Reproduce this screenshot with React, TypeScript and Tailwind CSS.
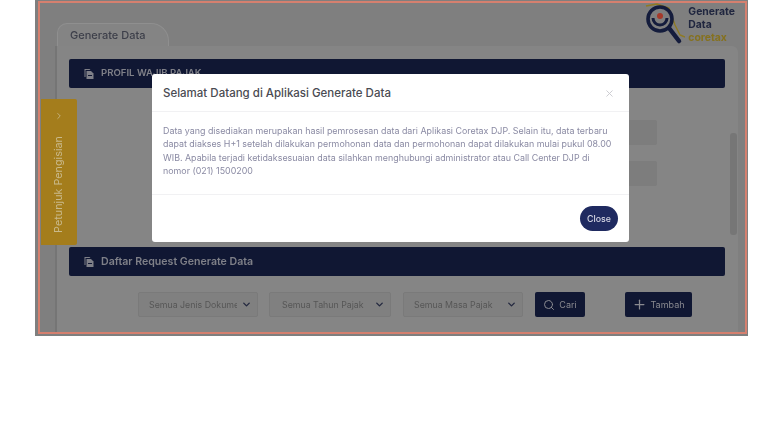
import { ChevronDown, ChevronRight, Plus, Search, X } from "lucide-react";

const font = "font-['Inter','Noto_Sans',sans-serif]";

const Filter = ({ label, width, pad }: { label: string; width: string; pad: string }) => (
  <div className={`flex h-[25px] items-center justify-between rounded-[2px] border border-[#7a7a7a] bg-[#808080] pr-[5px] ${pad} ${width}`}>
    <span className="w-[88px] overflow-hidden whitespace-nowrap text-[8.8px] text-[#565656]">{label}</span>
    <ChevronDown className="h-[11px] w-[11px] shrink-0 text-[#23283f]" strokeWidth={3} />
  </div>
);

const DocIcon = () => (
  <svg width="12" height="12" viewBox="0 0 12 12" fill="none">
    <path d="M1.5 1h5l1 1H2.5v7h-1z" fill="#7f8088" />
    <path d="M3.5 3h4.5l2.5 2.5V11h-7z" fill="#7f8088" />
    <rect x="5" y="7" width="4" height="1" fill="#101733" />
  </svg>
);

const SectionBar = ({ title, titleClass }: { title: string; titleClass: string }) => (
  <div className="flex h-[29px] items-center gap-[6px] rounded-[2px] bg-[#101733] pl-[14px]">
    <DocIcon />
    <span className={`font-semibold text-[#7f8088] ${titleClass}`}>{title}</span>
  </div>
);

const Logo = () => (
  <div className="flex items-start gap-[3px]">
    <svg width="42" height="44" viewBox="0 0 42 44" fill="none">
      <path d="M3 3 L14 1 L26 5 L32 22 L37 32 L42 34" stroke="#8f7a22" strokeWidth="1.4" />
      <circle cx="17" cy="16" r="12" fill="#7f7f7f" stroke="#141c3c" strokeWidth="3.6" />
      <path d="M10 15 a7 7 0 0 0 14 0" stroke="#141c3c" strokeWidth="3" />
      <circle cx="17" cy="13" r="3" fill="#a5392a" />
      <path d="M26 25 L36 38" stroke="#141c3c" strokeWidth="4.5" strokeLinecap="round" />
    </svg>
    <div className="pt-[2px] text-[10.4px] leading-[13px] font-bold text-[#20263f]">
      <div>Generate</div>
      <div>Data</div>
      <div className="text-[#85711f]">coretax</div>
    </div>
  </div>
);

const App = () => {
  return (
    <div className={`h-[426px] w-[758px] overflow-hidden bg-white ${font}`}>
      <div className="relative ml-[35px] h-[336px] w-[713px] bg-[#7f7f7f] pl-[3px] pr-[1px] pt-[1px] blur-[0.4px]">
        <div className="flex h-[333px] w-[709px] flex-col border-2 border-[#d5806f]">
          {/* top strip with tab and logo */}
          <div className="flex h-[43px] items-end justify-between pl-[17px] pr-[10px]">
            <div className="flex h-[23px] w-[112px] items-center rounded-tl-[10px] rounded-tr-[18px] border border-b-0 border-[#8f8f8f] bg-[#848484] pl-[12px] text-[11px] font-medium text-[#3d3f4a]">
              Generate Data
            </div>
            <div className="mb-[1px] self-start">
              <Logo />
            </div>
          </div>

          {/* main panel */}
          <div className="ml-[15px] mr-[7px] flex flex-1 flex-col rounded-tr-[6px] border-l-2 border-[#757575] bg-[#858585] pl-[12px] pr-[13px] pt-[13px]">
            <SectionBar title="PROFIL WAJIB PAJAK" titleClass="text-[9.6px]" />
            <div className="flex h-[159px] flex-col items-end gap-[16px] pr-[68px] pt-[32px]">
              <div className="h-[25px] w-[60px] rounded-[2px] bg-[#7d7d7d]" />
              <div className="h-[25px] w-[60px] rounded-[2px] bg-[#7d7d7d]" />
            </div>
            <SectionBar title="Daftar Request Generate Data" titleClass="text-[10.6px]" />
            <div className="flex items-center pl-[69px] pt-[16px]">
              <Filter label="Semua Jenis Dokumen" width="w-[120px]" pad="pl-[10px]" />
              <div className="w-[11px]" />
              <Filter label="Semua Tahun Pajak" width="w-[122px]" pad="pl-[12px]" />
              <div className="w-[12px]" />
              <Filter label="Semua Masa Pajak" width="w-[120px]" pad="pl-[10px]" />
              <div className="ml-[12px] flex h-[25px] w-[50px] items-center justify-center gap-[4px] rounded-[2px] bg-[#101733] text-[9px] text-[#8a8a90]">
                <Search className="h-[12px] w-[12px]" />
                Cari
              </div>
              <div className="ml-[40px] flex h-[25px] w-[67px] items-center justify-center gap-[3px] rounded-[2px] bg-[#101733] text-[9px] text-[#8a8a90]">
                <Plus className="h-[15px] w-[15px]" />
                Tambah
              </div>
            </div>
          </div>
        </div>

        {/* scrollbar */}
        <div className="absolute left-[695px] top-[133px] h-[102px] w-[7px] rounded-[3px] bg-[#767676]" />
      </div>

      {/* side tab */}
      <div className="absolute left-[41px] top-[99px] flex h-[146px] w-[36px] flex-col items-center rounded-r-[2px] bg-[#a47d1c] pt-[12px] text-[#c9b98a] blur-[0.3px]">
        <ChevronRight className="h-[10px] w-[10px]" />
        <span className="mt-[15px] rotate-180 text-[10.8px] whitespace-nowrap [writing-mode:vertical-rl]">
          Petunjuk Pengisian
        </span>
      </div>

      {/* modal */}
      <div className="absolute left-[152px] top-[74px] flex h-[168px] w-[477px] flex-col rounded-[3px] bg-white blur-[0.3px]">
        <div className="flex h-[38px] items-center justify-between border-b border-[#f1f1f3] pl-[11px] pr-[14px] pt-[2px]">
          <span className="text-[11.5px] font-medium text-[#4a4b52]">Selamat Datang di Aplikasi Generate Data</span>
          <X className="h-[11px] w-[11px] text-[#c9c9cf]" />
        </div>
        <div className="h-[83px] border-b border-[#f1f1f3] pl-[11px] pt-[12px] text-[8.9px] leading-[13.3px] whitespace-nowrap text-[#8a8aa3]">
          Data yang disediakan merupakan hasil pemrosesan data dari Aplikasi Coretax DJP. Selain itu, data terbaru
          <br />
          dapat diakses H+1 setelah dilakukan permohonan data dan permohonan dapat dilakukan mulai pukul 08.00
          <br />
          WIB. Apabila terjadi ketidaksesuaian data silahkan menghubungi administrator atau Call Center DJP di
          <br />
          nomor (021) 1500200
        </div>
        <div className="flex flex-1 items-center justify-end pr-[11px]">
          <div className="flex h-[25px] w-[38px] items-center justify-center rounded-full bg-[#1f2a60] text-[8.8px] font-medium text-[#d8d9e6]">
            Close
          </div>
        </div>
      </div>
    </div>
  );
};

export default App;
